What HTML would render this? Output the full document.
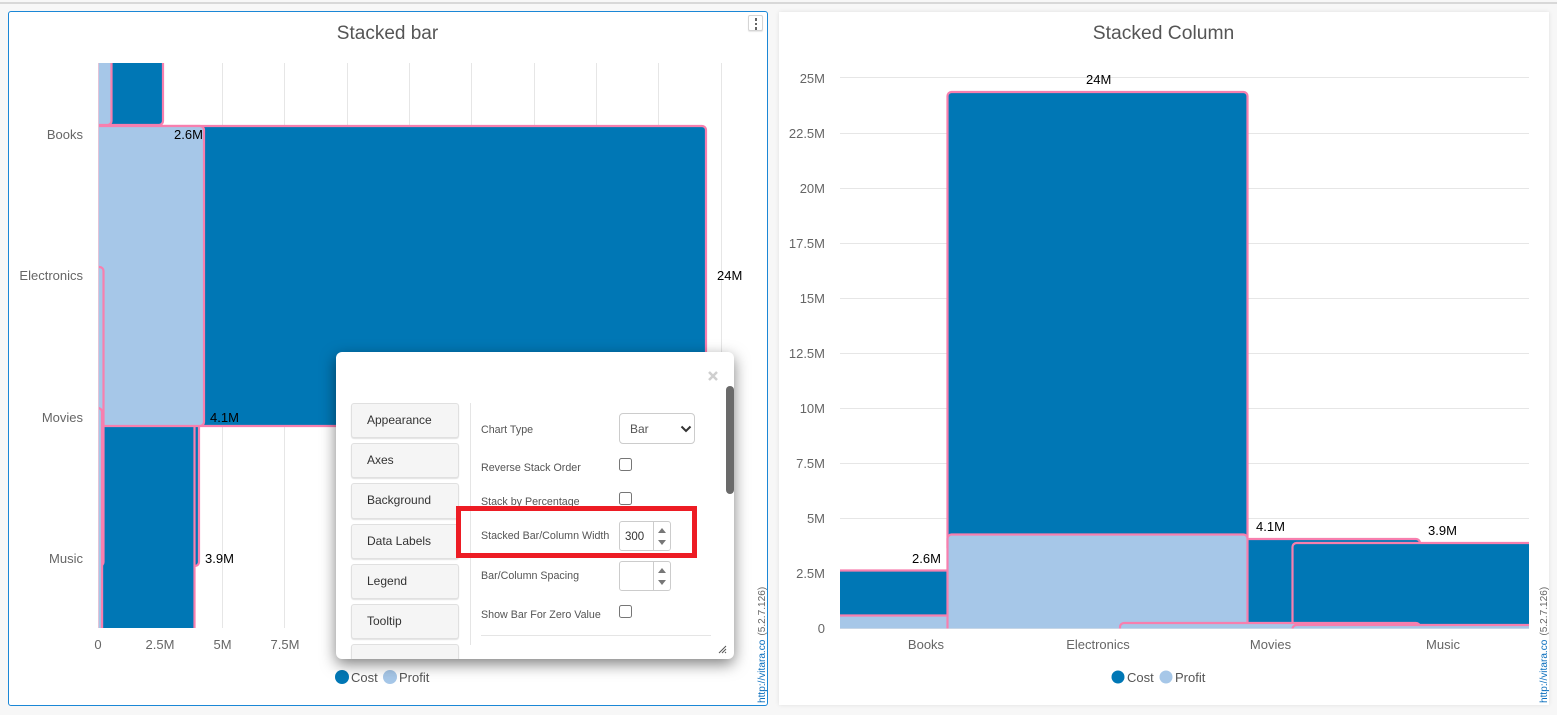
<!DOCTYPE html>
<html><head><meta charset="utf-8"><style>
html,body{margin:0;padding:0;width:1557px;height:715px;overflow:hidden;background:#f7f7f7;font-family:"Liberation Sans",Arial,sans-serif}
#top{position:absolute;left:0;top:2px;width:1557px;height:2px;background:#d8d8d8}
.panel{position:absolute;background:#fff;box-sizing:border-box}
#p1{left:8px;top:11px;width:760px;height:695px;border:1px solid #1b87d6;border-radius:3px}
#p2{left:779px;top:12px;width:770px;height:693px;box-shadow:0 0 4px rgba(0,0,0,.1)}
svg{position:absolute;left:0;top:0}
.keb{position:absolute;left:748px;top:15px;width:15px;height:16px;box-sizing:border-box;border:1px solid #d5d5d5;border-radius:2px;background:#fff;box-shadow:0 1px 1px rgba(0,0,0,.1)}
.keb i{position:absolute;left:5.500px;width:2.500px;height:2.500px;background:#666}
#m{position:absolute;left:336px;top:352px;width:398px;height:307px;background:#fff;border-radius:6px;box-shadow:0 5px 15px rgba(0,0,0,.5);overflow:hidden}
.tab{position:absolute;left:15px;width:108px;box-sizing:border-box;border:1px solid #e0e0e0;border-radius:3px;background:#f5f5f5;box-shadow:0 1px 1px rgba(0,0,0,.12);font-size:12px;color:#333;padding-left:15px}
.lab{position:absolute;left:145px;font-size:10.700px;color:#555;white-space:nowrap;line-height:14px}
.cb{position:absolute;left:283px;width:13px;height:13px;box-sizing:border-box;border:1px solid #767676;border-radius:2.500px;background:#fff}
.sp{position:absolute;left:283px;width:52px;height:30px;box-sizing:border-box;border:1px solid #ccc;border-radius:3px;font-size:11.500px;color:#333;line-height:30px;padding-left:5px}
.sp b{position:absolute;left:33px;top:0;width:1px;height:28px;background:#ccc}
.sp u,.sp s{position:absolute;left:38px;width:0;height:0;border-left:4px solid transparent;border-right:4px solid transparent}
.sp u{top:6px;border-bottom:5px solid #777}
.sp s{top:18px;border-top:5px solid #777}
</style></head><body>
<div id="top"></div>
<div class="panel" id="p1"></div>
<div class="panel" id="p2"></div>
<svg width="1557" height="715" viewBox="0 0 1557 715" font-family="Liberation Sans, Arial, sans-serif">
<defs>
<clipPath id="c1"><rect x="98" y="63" width="640" height="565"/></clipPath>
<clipPath id="c2"><rect x="840" y="60" width="689" height="568.500"/></clipPath>
</defs>
<g stroke="#e6e6e6" stroke-width="1">
<path d="M222.500 63V628M284.500 63V628M347.500 63V628M409.500 63V628M471.500 63V628M534.500 63V628M596.500 63V628M658.500 63V628M721.500 63V628"/>
<path d="M840 77.500H1529M840 133.500H1529M840 188.500H1529M840 243.500H1529M840 298.500H1529M840 353.500H1529M840 408.500H1529M840 463.500H1529M840 518.500H1529M840 573.500H1529M840 628.500H1529"/>
</g>
<g clip-path="url(#c1)" stroke="#f77fae" stroke-width="2.200">
<rect x="103" y="-175" width="60" height="300" rx="4" fill="#0077b5"/>
<rect x="100" y="126" width="606" height="300" rx="4" fill="#0077b5"/>
<rect x="103" y="267" width="96" height="299" rx="4" fill="#0077b5"/>
<rect x="102" y="409" width="92.500" height="300" rx="4" fill="#0077b5"/>
<rect x="90" y="-175" width="21.500" height="300" rx="4" fill="#a6c7e8"/>
<rect x="90" y="126" width="114" height="300" rx="4" fill="#a6c7e8"/>
<rect x="90" y="267" width="13.500" height="299" rx="4" fill="#a6c7e8"/>
<rect x="90" y="408" width="12" height="300" rx="4" fill="#a6c7e8"/>
<path d="M98.500 63V628" stroke="#e3c3d8" stroke-width="1"/>
</g>
<g clip-path="url(#c2)" stroke="#f77fae" stroke-width="2.200">
<rect x="776" y="570.500" width="300" height="60" rx="3" fill="#0077b5"/>
<rect x="947.500" y="92" width="300" height="460" rx="4" fill="#0077b5"/>
<rect x="1120" y="539" width="300" height="100" rx="4" fill="#0077b5"/>
<rect x="1292.500" y="543" width="300" height="100" rx="4" fill="#0077b5"/>
<rect x="776" y="615.500" width="300" height="30" rx="3" fill="#a6c7e8"/>
<rect x="947.500" y="534.500" width="300" height="110" rx="4" fill="#a6c7e8"/>
<rect x="1120" y="623" width="300" height="20" rx="4" fill="#a6c7e8"/>
<rect x="1292.500" y="625" width="300" height="20" rx="4" fill="#a6c7e8"/>
</g>
<g fill="#555" text-anchor="middle">
<text x="387.500" y="39" font-size="19">Stacked bar</text>
<text x="1163.500" y="39" font-size="19.300">Stacked Column</text>
</g>
<g font-size="13" fill="#666" text-anchor="end">
<text x="83" y="139">Books</text>
<text x="83" y="280">Electronics</text>
<text x="83" y="422">Movies</text>
<text x="83" y="563">Music</text>
<text x="825" y="83">25M</text>
<text x="825" y="138">22.5M</text>
<text x="825" y="193">20M</text>
<text x="825" y="248">17.5M</text>
<text x="825" y="303">15M</text>
<text x="825" y="358">12.5M</text>
<text x="825" y="413">10M</text>
<text x="825" y="468">7.5M</text>
<text x="825" y="523">5M</text>
<text x="825" y="578">2.5M</text>
<text x="825" y="633">0</text>
</g>
<g font-size="13" fill="#666" text-anchor="middle">
<text x="98" y="649">0</text>
<text x="160" y="649">2.5M</text>
<text x="222.500" y="649">5M</text>
<text x="285" y="649">7.5M</text>
<text x="926" y="649">Books</text>
<text x="1098" y="649">Electronics</text>
<text x="1270.500" y="649">Movies</text>
<text x="1443" y="649">Music</text>
</g>
<g font-size="13" fill="#000">
<text x="174" y="139">2.6M</text>
<text x="717" y="280">24M</text>
<text x="210" y="422">4.1M</text>
<text x="205" y="563">3.9M</text>
<text x="1086" y="84">24M</text>
<text x="912" y="563">2.6M</text>
<text x="1256" y="531">4.1M</text>
<text x="1428" y="535">3.9M</text>
</g>
<circle cx="342" cy="677" r="7" fill="#0077b5"/>
<circle cx="390" cy="677" r="7" fill="#a6c7e8"/>
<circle cx="1118" cy="677" r="6.500" fill="#0077b5"/>
<circle cx="1166" cy="677" r="6.500" fill="#a6c7e8"/>
<g font-size="13" fill="#555">
<text x="351" y="682">Cost</text><text x="399" y="682">Profit</text>
<text x="1127" y="682">Cost</text><text x="1175" y="682">Profit</text>
</g>
<text transform="translate(765,703) rotate(-90)" font-size="10.100"><tspan fill="#0a6ebd">http://vitara.co</tspan><tspan fill="#666" dx="4">(5.2.7.126)</tspan></text>
<text transform="translate(1547,703) rotate(-90)" font-size="10.100"><tspan fill="#0a6ebd">http://vitara.co</tspan><tspan fill="#666" dx="4">(5.2.7.126)</tspan></text>
</svg>
<div class="keb"><i style="top:2px"></i><i style="top:6.500px"></i><i style="top:11px"></i></div>
<div id="m">
<svg width="398" height="307" style="left:0;top:0">
<path d="M373 20l8 8m0-8l-8 8" stroke="#cfcfcf" stroke-width="2.500"/>
<path d="M383 301l7-7M386 301l4-4M389 301l1-1" stroke="#555" stroke-width="1"/>
</svg>
<div class="tab" style="top:51px;height:35px;line-height:33px">Appearance</div>
<div class="tab" style="top:91px;height:35px;line-height:33px">Axes</div>
<div class="tab" style="top:131px;height:36px;line-height:33px">Background</div>
<div class="tab" style="top:172px;height:35px;line-height:33px">Data Labels</div>
<div class="tab" style="top:212px;height:35px;line-height:33px">Legend</div>
<div class="tab" style="top:252px;height:35px;line-height:33px">Tooltip</div>
<div class="tab" style="top:292px;height:35px"></div>
<div style="position:absolute;left:134px;top:51px;width:1px;height:242px;background:#e5e5e5"></div>
<div class="lab" style="top:71px">Chart Type</div>
<div class="lab" style="top:109px">Reverse Stack Order</div>
<div class="lab" style="top:143px">Stack by Percentage</div>
<div class="lab" style="top:177px">Stacked Bar/Column Width</div>
<div class="lab" style="top:217px">Bar/Column Spacing</div>
<div class="lab" style="top:256px">Show Bar For Zero Value</div>
<div style="position:absolute;left:283px;top:61px;width:76px;height:31px;box-sizing:border-box;border:1px solid #ccc;border-radius:4px;font-size:12px;color:#555;line-height:30px;padding-left:10px">Bar
<svg width="12" height="8" style="left:60px;top:11px"><path d="M1.500 1.500l4.500 4.500 4.500-4.500" fill="none" stroke="#333" stroke-width="2"/></svg></div>
<div class="cb" style="top:106px"></div>
<div class="cb" style="top:140px"></div>
<div class="cb" style="top:253px"></div>
<div class="sp" style="top:169px">300<b></b><u></u><s></s></div>
<div class="sp" style="top:209px"><b></b><u></u><s></s></div>
<div style="position:absolute;left:145px;top:283px;width:230px;height:1px;background:#e5e5e5"></div>
<div style="position:absolute;left:120px;top:154px;width:241px;height:52px;box-sizing:border-box;border:5px solid #ed1c24"></div>
<div style="position:absolute;left:390px;top:34px;width:8px;height:108px;background:#6a6a6a;border-radius:4px"></div>
</div>
</body></html>
